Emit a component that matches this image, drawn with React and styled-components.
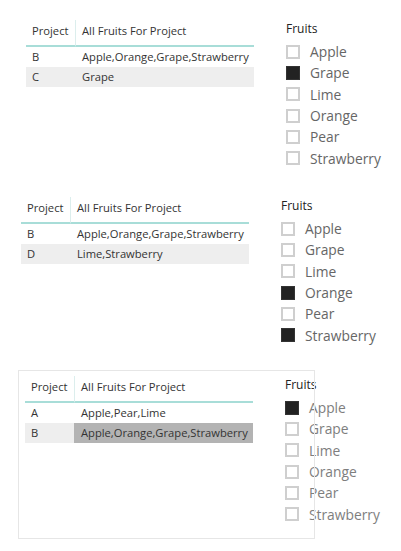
import React from "react";
import styled, { createGlobalStyle } from "styled-components";

const Global = createGlobalStyle`
  html, body { margin: 0; padding: 0; background: #fff; }
  body { font-family: "Segoe UI", "Open Sans", "Noto Sans", sans-serif; }
`;

const Page = styled.div`
  width: 401px;
  height: 551px;
  overflow: hidden;
  display: flex;
  flex-direction: column;
  padding-top: 20px;
  box-sizing: border-box;
`;

const Section = styled.div`
  position: relative;
  display: flex;
  align-items: flex-start;
  gap: 32px;
  flex: none;
  height: ${(p) => p.$h}px;
  padding-left: ${(p) => p.$left}px;
  ${(p) =>
    p.$framed &&
    `
    &::before {
      content: "";
      position: absolute;
      left: 18px;
      top: -6px;
      width: 295px;
      height: 167px;
      border: 1px solid #e6e6e6;
      pointer-events: none;
      z-index: 2;
    }
  `}
`;

const Table = styled.div`
  width: 228px;
  display: grid;
  grid-template-columns: 49px 1fr;
  font-size: 11.2px;
  color: #333;
`;

const HeadCell = styled.div`
  height: 25px;
  line-height: 21px;
  padding-left: 6px;
  border-bottom: 2px solid #a8ddd8;
  white-space: nowrap;
  ${(p) => p.$divider && `border-left: 1px solid #dceeed; padding-left: 6px;`}
`;

const Cell = styled.div`
  height: 20px;
  line-height: 19px;
  padding-left: 6px;
  white-space: nowrap;
  background: ${(p) => (p.$selected ? "#b3b3b3" : p.$alt ? "#eeeeee" : "transparent")};
  ${(p) => p.$second && `padding-left: 7px;`}
`;

const Slicer = styled.div`
  display: flex;
  flex-direction: column;
`;

const SlicerTitle = styled.div`
  font-size: 12px;
  line-height: 18px;
  color: #222;
  margin-bottom: 3px;
`;

const Item = styled.div`
  display: flex;
  align-items: center;
  height: 21.3px;
  gap: 10px;
  font-size: 13.8px;
  color: ${(p) => (p.$dim ? "#7e7e7e" : "#666")};
`;

const Box = styled.span`
  width: 14px;
  height: 14px;
  box-sizing: border-box;
  flex: none;
  border: ${(p) => (p.$checked ? "1px solid #333" : "2px solid #cfcfcf")};
  background: ${(p) => (p.$checked ? "#222" : "#fff")};
`;

const fruits = ["Apple", "Grape", "Lime", "Orange", "Pear", "Strawberry"];

const sections = [
  {
    left: 26,
    h: 177,
    rows: [
      { p: "B", f: "Apple,Orange,Grape,Strawberry" },
      { p: "C", f: "Grape", alt: true },
    ],
    checked: ["Grape"],
  },
  {
    left: 21,
    h: 179,
    rows: [
      { p: "B", f: "Apple,Orange,Grape,Strawberry" },
      { p: "D", f: "Lime,Strawberry", alt: true },
    ],
    checked: ["Orange", "Strawberry"],
  },
  {
    left: 25,
    h: 170,
    framed: true,
    dim: true,
    rows: [
      { p: "A", f: "Apple,Pear,Lime" },
      { p: "B", f: "Apple,Orange,Grape,Strawberry", alt: true, sel: true },
    ],
    checked: ["Apple"],
  },
];

export default function App() {
  return (
    <Page>
      <Global />
      {sections.map((s, i) => (
        <Section key={i} $left={s.left} $h={s.h} $framed={s.framed}>
          <Table>
            <HeadCell>Project</HeadCell>
            <HeadCell $divider>All Fruits For Project</HeadCell>
            {s.rows.map((r) => (
              <React.Fragment key={r.p}>
                <Cell $alt={r.alt}>{r.p}</Cell>
                <Cell $alt={r.alt} $selected={r.sel} $second>
                  {r.f}
                </Cell>
              </React.Fragment>
            ))}
          </Table>
          <Slicer>
            <SlicerTitle>Fruits</SlicerTitle>
            {fruits.map((f) => (
              <Item key={f} $dim={s.dim}>
                <Box $checked={s.checked.includes(f)} />
                {f}
              </Item>
            ))}
          </Slicer>
        </Section>
      ))}
    </Page>
  );
}
